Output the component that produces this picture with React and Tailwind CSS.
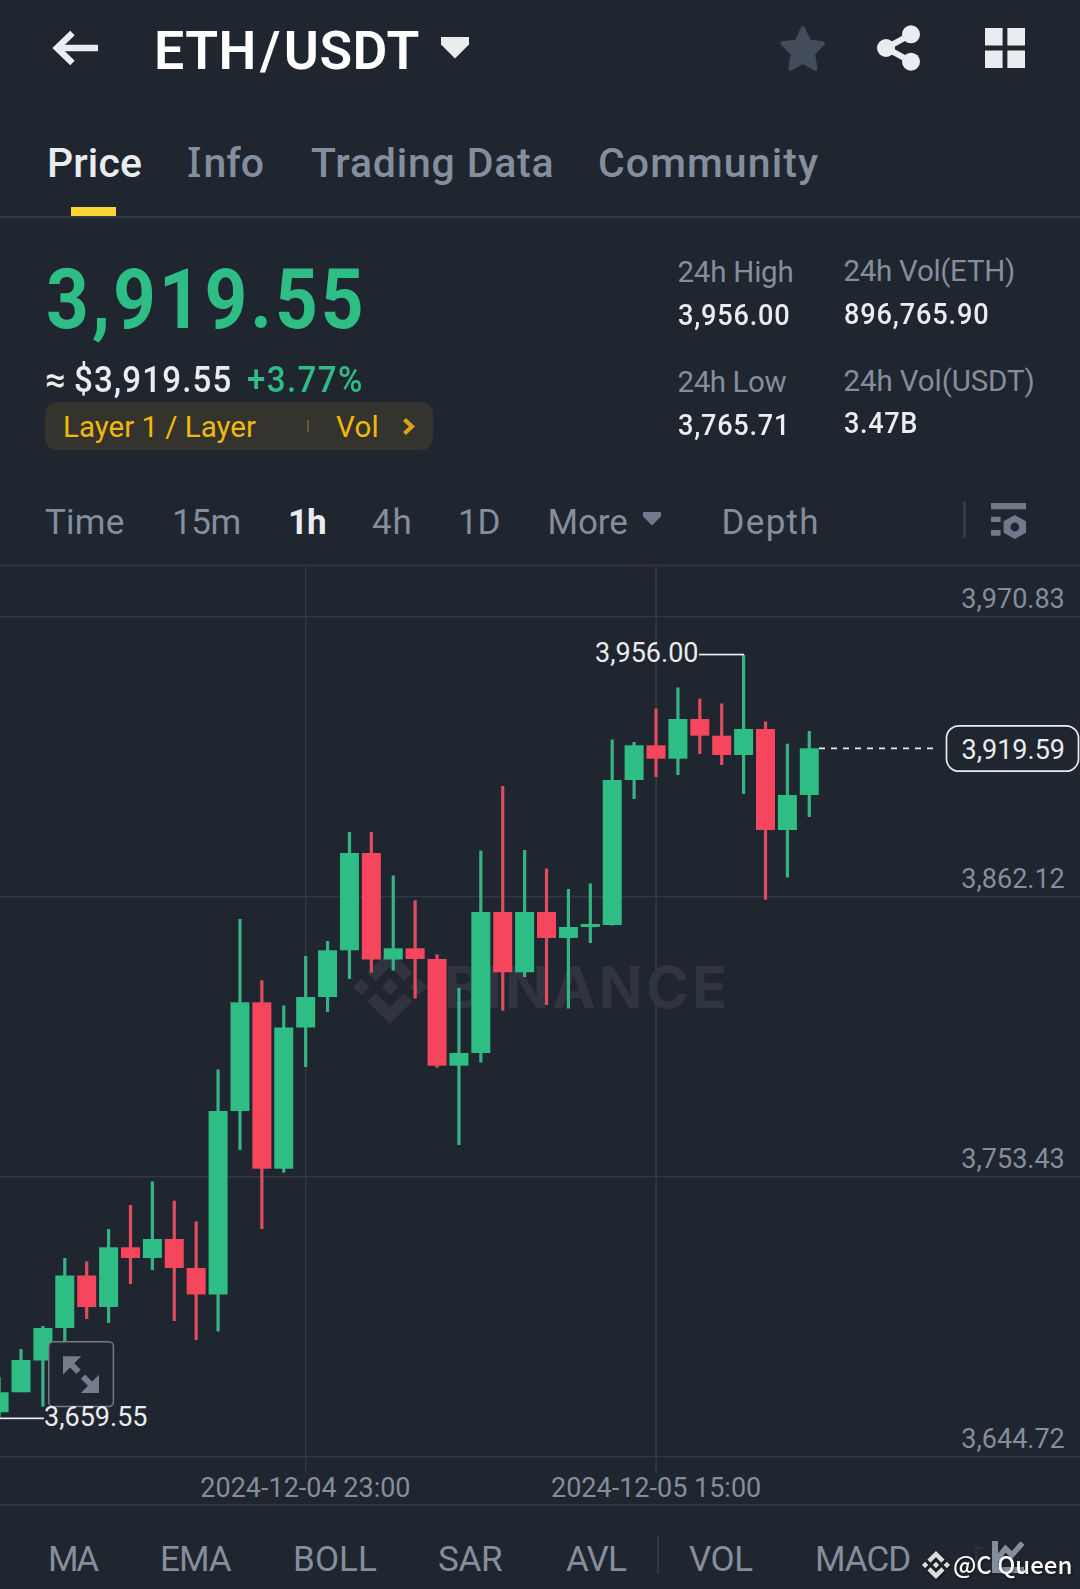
import React from 'react';

const UP = '#2ebd85';
const DOWN = '#f6465d';
const GRID = '#333944';

/* [rising, body top, body bottom, wick top, wick bottom] */
const candles = [
  [1, 1392.3, 1412.3, 1377, 1417],
  [1, 1360, 1392.3, 1349, 1392],
  [1, 1328, 1360.5, 1326, 1406.5],
  [1, 1275.5, 1328, 1258, 1350],
  [0, 1275.5, 1307, 1261.5, 1319],
  [1, 1247.3, 1307, 1229, 1323],
  [0, 1247.3, 1258, 1205, 1284],
  [1, 1239, 1258, 1181.5, 1270],
  [0, 1239, 1268, 1200.7, 1321],
  [0, 1268, 1294.5, 1221.5, 1340],
  [1, 1111, 1294.5, 1069.5, 1331.5],
  [1, 1002.3, 1111, 919, 1150],
  [0, 1002.3, 1168.7, 980.3, 1229],
  [1, 1027.5, 1168.7, 1005.5, 1172.7],
  [1, 997, 1027.5, 956, 1067],
  [1, 950.3, 997, 941, 1012],
  [1, 853, 950.3, 832, 979],
  [0, 853, 959.5, 832, 972.5],
  [1, 948.3, 959.5, 875.5, 970.5],
  [0, 948.3, 959, 900.3, 998.5],
  [0, 959, 1065.7, 954.5, 1067.7],
  [1, 1053, 1065.7, 988, 1145],
  [1, 912, 1053, 850.5, 1062.5],
  [0, 912, 972.3, 786, 1010.7],
  [1, 912, 972.3, 850, 977],
  [0, 912, 938, 868.5, 1005],
  [1, 927, 938, 889, 1008.5],
  [1, 924, 927, 883.5, 943],
  [1, 780, 925, 739.5, 925.5],
  [1, 745.3, 780, 742, 799],
  [0, 745.3, 758.7, 708.5, 777],
  [1, 719, 758.7, 687.5, 775],
  [0, 719, 735.7, 698.7, 754],
  [0, 735.7, 755, 703.5, 765],
  [1, 729, 755, 654.7, 794],
  [0, 729, 830, 721.5, 899.7],
  [1, 795, 830, 743.7, 877.5],
  [1, 748.3, 795, 731, 817],
];

const BINANCE_MARK =
  'M16.624 13.9202l2.7175 2.7154-7.353 7.353-7.353-7.352 2.7175-2.7164 4.6355 4.6595 4.6356-4.6595zm4.6366-4.6366L24 12l-2.7154 2.7164L18.5682 12l2.6924-2.7164zm-9.272.001l2.7163 2.6914-2.7164 2.7174v-.001L9.2721 12l2.7164-2.7154zm-9.2722-.001L5.4088 12l-2.6914 2.6924L0 12l2.7164-2.7164zM11.9885.0115l7.353 7.329-2.7174 2.7154-4.6356-4.6356-4.6355 4.6595-2.7174-2.7154 7.353-7.353z';

function Header() {
  return (
    <header className="flex h-24 items-center pl-[52px] pr-[55px]">
      <svg className="h-[36px] w-[46px] shrink-0" viewBox="52 30 46 36" fill="none" stroke="#eaecef" strokeWidth="6.5">
        <path d="M72.5 33 57 48l15.5 15M57 48h41" />
      </svg>
      <h1 className="ml-[56px] mt-1.5 w-[265px] whitespace-nowrap text-[53.5px] font-semibold leading-none tracking-[0.5px] text-white">
        ETH<span className="mx-[3px]">/</span>USDT
      </h1>
      <svg className="ml-[22px] h-[22px] w-[28px] shrink-0" viewBox="0 0 28 22" fill="#eaecef">
        <path d="M0 0h28v7.5L14 21.5 0 7.5z" />
      </svg>
      <svg className="ml-auto h-[46px] w-[46px] shrink-0" viewBox="780 25.3 46 46" fill="#434c5a" stroke="#434c5a" strokeWidth="4" strokeLinejoin="round">
        <path d="M802.9 28.5 809.2 41.8 823 43.6 813 54.2 815.5 69 802.9 62.4 790.3 69 792.6 54.2 782.6 43.6 796.6 41.8z" />
      </svg>
      <svg className="ml-[51px] h-[46px] w-[44px] shrink-0" viewBox="877 25 44 46" fill="#eaecef">
        <path d="M911 34.3 886 48l25 13.7" fill="none" stroke="#eaecef" strokeWidth="6" />
        <circle cx="886" cy="48" r="9" />
        <circle cx="911" cy="34.3" r="9" />
        <circle cx="911" cy="61.7" r="9" />
      </svg>
      <svg className="ml-[64px] h-[40px] w-[40px] shrink-0" viewBox="0 0 40 40" fill="#eaecef">
        <path d="M0 0h17.6v17.4H0zM22.4 0H40v17.4H22.4zM0 22.4h17.6V40H0zM22.4 22.4H40V40H22.4z" />
      </svg>
    </header>
  );
}

function Tabs() {
  return (
    <nav className="flex h-[122px] whitespace-nowrap border-b-2 border-[#333a47] pl-[47px] pt-[37px] text-[41px] font-medium leading-[61px] text-[#848e9c]">
      <div className="flex w-[93px] flex-col">
        <span className="tracking-[0.1px] text-[#eaecef]">Price</span>
        <span className="mt-[13px] h-[9px] w-[45px] self-center bg-[#fcd535]" />
      </div>
      <span className="ml-[47px] w-[124px]">
        <span className="mr-[2px] font-['Noto_Sans',sans-serif] leading-none">I</span>nfo
      </span>
      <span className="w-[287px] tracking-[0.8px]">Trading Data</span>
      <span className="tracking-[1.1px]">Community</span>
    </nav>
  );
}

function Summary() {
  return (
    <section className="flex h-[268px] whitespace-nowrap text-[#eaecef]">
      <div className="w-[677.5px] pl-[45px] pt-[31px]">
        <div className="origin-left scale-x-90 pl-[1px] text-[83px] font-bold leading-[101px] tracking-[3.25px] text-[#2ebd85]">3,919.55</div>
        <div className="mt-[9px] flex h-[43px] text-[36px] font-medium leading-[43px]">
          <span className="w-[29px]">≈</span>
          <span className="w-[173px] origin-left scale-x-92 tracking-[1.2px]">$3,919.55</span>
          <span className="origin-left scale-x-92 tracking-[1.5px] text-[#2ebd85]">+3.77%</span>
        </div>
        <div className="flex h-[48px] w-[388px] items-center rounded-xl bg-[#35332d] pl-[18px] text-[29.5px] leading-none text-[#f0b90b]">
          <span className="w-[244px] pt-[3px]">Layer 1 / Layer</span>
          <span className="h-[12px] w-[2px] bg-[#6b5a26]" />
          <span className="ml-[27px] w-[67px] pt-[3px] tracking-[0.28px]">Vol</span>
          <svg className="h-[17px] w-[13px]" viewBox="0 0 13 17" fill="none" stroke="#d9a01a" strokeWidth="4.2">
            <path d="M1.5 1.5 8.9 8.5 1.5 15.5" />
          </svg>
        </div>
      </div>
      <div className="flex w-[166px] flex-col gap-[24px] pt-[33px] text-[29.5px] leading-[43px]">
        <div>
          <div className="tracking-[-0.22px] text-[#848e9c]">24h High</div>
          <div className="origin-left scale-x-92 font-medium tracking-[0.85px]">3,956.00</div>
        </div>
        <div>
          <div className="tracking-[-0.41px] text-[#848e9c]">24h Low</div>
          <div className="origin-left scale-x-92 font-medium tracking-[0.8px]">3,765.71</div>
        </div>
      </div>
      <div className="flex flex-col gap-[24.5px] pt-[32px] text-[29.5px] leading-[42.5px]">
        <div>
          <div className="tracking-[-0.29px] text-[#848e9c]">24h Vol(ETH)</div>
          <div className="origin-left scale-x-92 font-medium tracking-[0.92px]">896,765.90</div>
        </div>
        <div>
          <div className="tracking-[-0.1px] text-[#848e9c]">24h Vol(USDT)</div>
          <div className="origin-left scale-x-92 font-medium tracking-[0.68px]">3.47B</div>
        </div>
      </div>
    </section>
  );
}

function Intervals() {
  return (
    <div className="flex h-[81px] items-center whitespace-nowrap border-b-[3px] border-[#2b303b] pb-[5px] pl-[45px] text-[35px] leading-none text-[#848e9c]">
      <span className="w-[127px] tracking-[0.2px]">Time</span>
      <span className="w-[116px] tracking-[-0.4px]">15m</span>
      <span className="w-[84px] font-bold tracking-[-1px] text-[#eaecef]">1h</span>
      <span className="w-[86px] tracking-[0.8px]">4h</span>
      <span className="w-[89.5px] tracking-[-0.1px]">1D</span>
      <span className="w-[95.5px] tracking-[-0.1px]">More</span>
      <svg className="-mt-[7px] h-[14px] w-[18px]" viewBox="0 0 18 14" fill="#707a8a">
        <path d="M0 0h18v4.6L9 13.6 0 4.6z" />
      </svg>
      <span className="ml-[60.5px] w-[241.5px] tracking-[1.3px]">Depth</span>
      <span className="-mt-[6px] h-[37px] w-[3px] bg-[#333a45]" />
      <svg className="-mt-[4px] ml-[24.5px] h-[36px] w-[36px]" viewBox="991 502 36 36" fill="#707a8a">
        <path d="M991 502h35v6.3h-35zM991 515.7h9.6v5.4H991zM991 529h9.6v5.8H991z" />
        <path fillRule="evenodd" d="M1014.8 514l11.2 6.2v11.6l-11.2 6.2-11.2-6.2v-11.6zm0 7.6a4.4 4.4 0 1 0 0 8.8 4.4 4.4 0 0 0 0-8.8z" />
      </svg>
    </div>
  );
}

function Chart() {
  return (
    <div className="relative h-[937px]">
      <svg className="block h-[937px] w-[1080px]" viewBox="0 567 1080 937" fontFamily="Roboto, sans-serif" fontSize="27">
        <g fill={GRID}>
          {[616, 896, 1176, 1456].map((y) => (
            <rect key={y} x="0" y={y} width="1080" height="1.4" />
          ))}
          <rect x="305" y="567" width="1.4" height="905.5" />
          <rect x="655.2" y="567" width="1.8" height="905.5" />
        </g>
        <g fill="#2f343e">
          <path transform="translate(353 950) scale(3.083)" d={BINANCE_MARK} />
          <text x="444" y="1008" fontFamily="Inter, sans-serif" fontWeight="700" fontSize="58" letterSpacing="3.12">
            BINANCE
          </text>
        </g>
        {candles.map(([up, top, bottom, high, low], i) => {
          const x = -0.9 + 21.897 * i;
          return (
            <g key={i}>
              <rect x={x - 1.6} y={high} width="3.2" height={low - high} fill={up ? '#36b283' : '#e04c60'} />
              <rect x={x - 9.5} y={top} width="19" height={bottom - top} fill={up ? UP : DOWN} />
            </g>
          );
        })}
        <g fill="#848e9c">
          <text x="961.3" y="607.5">3,970.83</text>
          <text x="961.3" y="888">3,862.12</text>
          <text x="961.3" y="1167.7">3,753.43</text>
          <text x="961.3" y="1447.7">3,644.72</text>
          <text x="200.3" y="1497">2024-12-04 23:00</text>
          <text x="551" y="1497">2024-12-05 15:00</text>
        </g>
        <g fill="#eaecef">
          <text x="595" y="662">3,956.00</text>
          <rect x="699" y="653.7" width="45" height="1.7" />
          <rect x="0" y="1417.5" width="44" height="1.7" />
        </g>
        <path d="M819 748.4H933" stroke="#eaecef" strokeWidth="1.6" strokeDasharray="6 6" />
        <rect x="946.5" y="725.8" width="132" height="45.4" rx="12.5" fill="#1f262f" stroke="#eaecef" strokeWidth="1.7" />
        <text x="961.5" y="759" fill="#eaecef">3,919.59</text>
        <rect x="48.8" y="1341.7" width="64.6" height="64.9" rx="4.5" fill="#1f262f" stroke="#737b8b" strokeWidth="1.5" />
        <g fill="#757c8c">
          <path d="M63 1356.2h18.3L63 1374.4zM99 1393v-18.3L80.8 1393z" />
          <path d="M69 1362l9.5 9.8M83 1376.6l10 10" stroke="#757c8c" strokeWidth="6" />
        </g>
        <text x="44" y="1426" fill="#eaecef">3,659.55</text>
      </svg>
    </div>
  );
}

function Indicators() {
  return (
    <footer className="relative flex h-[85px] items-center whitespace-nowrap border-t-2 border-[#303641] pl-[48px] pt-[24px] text-[35px] leading-none text-[#848e9c]">
      <span className="w-[112px] tracking-[-2.5px]">MA</span>
      <span className="w-[133px] tracking-[-1px]">EMA</span>
      <span className="w-[145px] tracking-[0.1px]">BOLL</span>
      <span className="w-[128px] tracking-[-0.3px]">SAR</span>
      <span className="w-[91px] tracking-[-0.8px]">AVL</span>
      <span className="-mt-[9px] h-[37px] w-[2px] bg-[#333a45]" />
      <span className="ml-[30px] w-[126px] tracking-[-0.5px]">VOL</span>
      <span className="w-[160px] tracking-[-1px]">MACD</span>
      <span className="h-[25px] w-[8px] border-l-2 border-t-2 border-[#2b323d]" />
      <svg className="-mt-[6px] ml-[9px] h-[32px] w-[32px]" viewBox="992 1540 32 32" fill="none" stroke="#848e9c" strokeWidth="6">
        <path d="M995 1540v29h29" />
        <path d="M996 1559l9.5-11.5 6.5 6.5 10.5-12" strokeWidth="5.5" />
      </svg>
      <div className="absolute left-[922px] top-[42px] flex h-[32px] items-center drop-shadow-[1px_1px_1px_rgba(0,0,0,0.5)]">
        <svg className="mt-[2px] h-[28px] w-[28px]" viewBox="0 0 24 24" fill="#dcdcdc">
          <path d={BINANCE_MARK} />
        </svg>
        <span className="ml-[3px] font-['Noto_Sans_CJK_SC',sans-serif] text-[24px] font-medium leading-[32px] text-white">@C Queen</span>
      </div>
    </footer>
  );
}

export default function App() {
  return (
    <main className="h-[1589px] w-[1080px] overflow-hidden bg-[#1f262f] font-['Roboto',sans-serif]">
      <Header />
      <Tabs />
      <Summary />
      <Intervals />
      <Chart />
      <Indicators />
    </main>
  );
}
